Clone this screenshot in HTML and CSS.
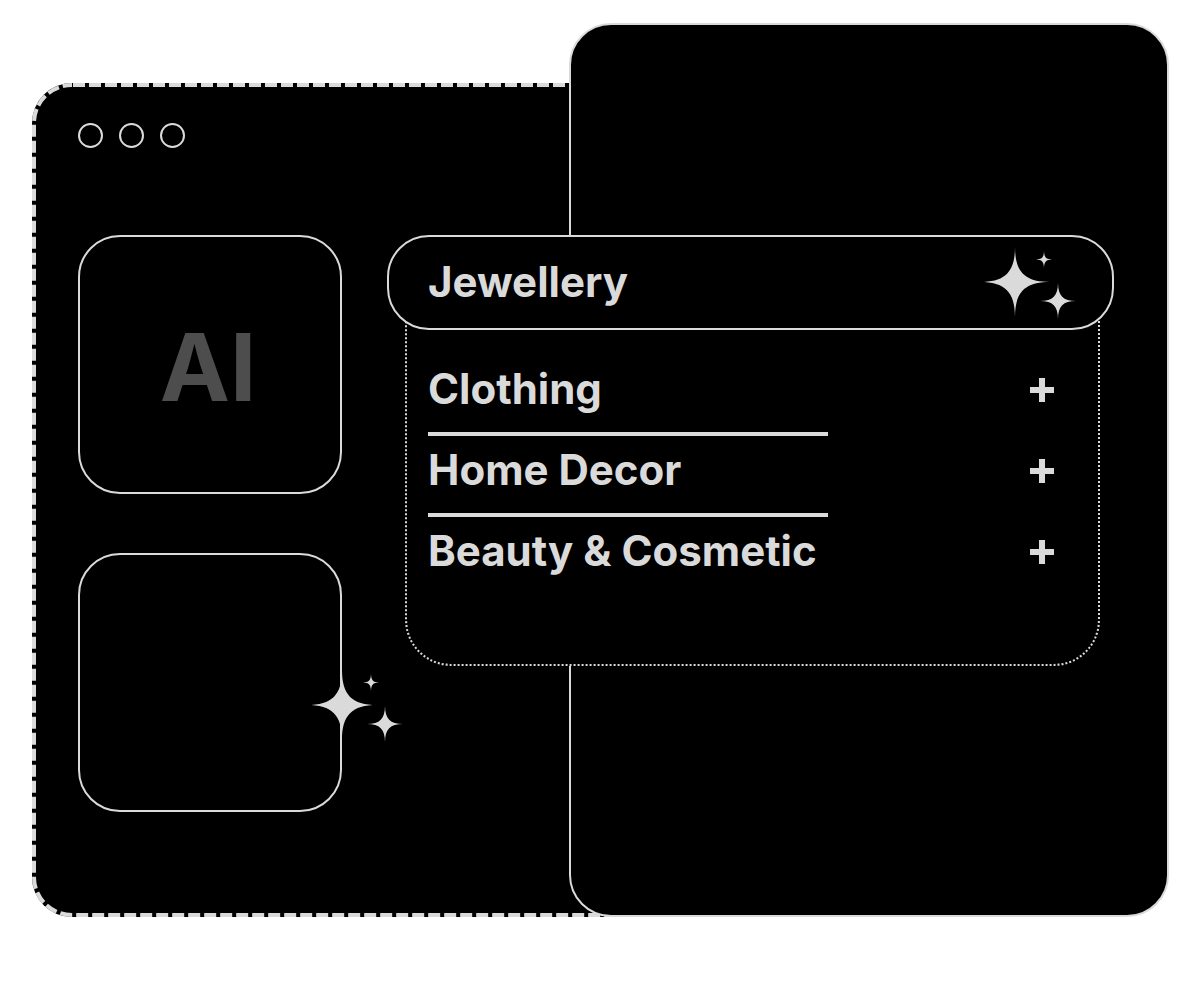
FILE: index.html
```html
<!DOCTYPE html>
<html lang="en">
<head>
    <meta charset="UTF-8">
    <meta name="viewport" content="width=device-width, initial-scale=1.0">
    <title>AI Categories</title>
    <link rel="stylesheet" href="styles.css">
</head>
<body>
    <svg class="defs" aria-hidden="true">
        <symbol id="sparkles" viewBox="0 0 96 72">
            <path d="M35 0C35 25 45 35 70 35C45 35 35 45 35 70C35 45 25 35 0 35C25 35 35 25 35 0Z"/>
            <path d="M64 4C64.300 10.500 66 12.200 72 12.500C66 12.800 64.300 14.500 64 21C63.700 14.500 62 12.800 56 12.500C62 12.200 63.700 10.500 64 4Z"/>
            <path d="M78 36C78.200 49 83 53.800 96 54C83 54.200 78.200 59 78 72C77.800 59 73 54.200 60 54C73 53.800 77.800 49 78 36Z"/>
        </symbol>
    </svg>
    <main class="stage">
        <section class="window">
            <svg class="window-border" aria-hidden="true"><rect/></svg>
            <div class="dots">
                <span class="dot"></span>
                <span class="dot"></span>
                <span class="dot"></span>
            </div>
            <div class="tiles">
                <div class="tile">AI</div>
                <div class="tile">
                    <svg class="sparkles tile-sparkles" aria-hidden="true"><use href="#sparkles"/></svg>
                </div>
            </div>
        </section>
        <section class="panel"></section>
        <section class="categories">
            <button class="selected" type="button">
                <span class="label">Jewellery</span>
                <svg class="sparkles" aria-hidden="true"><use href="#sparkles"/></svg>
            </button>
            <ul class="category-list">
                <li>
                    <div class="category"><span class="label">Clothing</span><button class="add" type="button" aria-label="Add Clothing"></button></div>
                </li>
                <li>
                    <div class="category"><span class="label">Home Decor</span><button class="add" type="button" aria-label="Add Home Decor"></button></div>
                </li>
                <li>
                    <div class="category"><span class="label">Beauty &amp; Cosmetic</span><button class="add" type="button" aria-label="Add Beauty &amp; Cosmetic"></button></div>
                </li>
            </ul>
        </section>
    </main>
</body>
</html>
```
FILE: styles.css
```css
* {
    box-sizing: border-box;
}
body {
    font-family: Inter, sans-serif;
    margin: 0;
    background-color: white;
    color: #dadada;
}
.defs {
    display: none;
}
.stage {
    display: grid;
    grid-template-columns: 537fr 600fr;
    grid-template-rows: 60px auto;
    padding: 23px 31px 40px 32px;
}
.window {
    position: relative;
    grid-column: 1 / 3;
    grid-row: 2;
    margin-right: 397px;
    padding: 40px 46px 105px;
    background-color: black;
    border-radius: 40px;
}
/* dashed outline, the dashes are longer than a css border gives */
.window-border {
    position: absolute;
    inset: 0;
    width: 100%;
    height: 100%;
}
.window-border rect {
    x: 2px;
    y: 2px;
    width: calc(100% - 4px);
    height: calc(100% - 4px);
    rx: 38px;
    fill: none;
    stroke: #dadada;
    stroke-width: 4px;
    stroke-dasharray: 12 4;
    stroke-dashoffset: -1px;
}
.dots {
    display: flex;
    gap: 16px;
    margin-bottom: 87px;
}
.dot {
    width: 25px;
    height: 25px;
    border: 2px solid #dadada;
    border-radius: 50%;
}
.tiles {
    display: flex;
    flex-direction: column;
    gap: 59px;
}
.tile {
    position: relative;
    display: flex;
    align-items: center;
    justify-content: center;
    width: 264px;
    height: 259px;
    padding: 4px 4px 0 0;
    border: 2px solid #dadada;
    border-radius: 42px;
    color: #4d4d4d;
    font-size: 94px;
    font-weight: bold;
}
.sparkles {
    width: 96px;
    height: 72px;
    fill: #dadada;
}
.tile-sparkles {
    position: absolute;
    top: 115px;
    right: -63px;
}
.panel {
    grid-column: 2;
    grid-row: 1 / 3;
    z-index: 1;
    background-color: black;
    border: 2px solid #dadada;
    border-radius: 42px;
}
.categories {
    grid-column: 1 / 3;
    grid-row: 1 / 3;
    align-self: start;
    z-index: 2;
    margin: 212px 55px 0 355px;
    font-size: 42px;
    font-weight: bold;
}
.label {
    padding-bottom: 3px;
}
.selected {
    position: relative;
    display: flex;
    align-items: center;
    justify-content: space-between;
    width: 100%;
    height: 95px;
    padding: 0 36px 0 39px;
    background-color: black;
    border: 2px solid #dadada;
    border-radius: 42px;
    color: inherit;
    font: inherit;
    cursor: pointer;
}
.category-list {
    list-style: none;
    margin: -40px 14px 0 18px;
    padding: 75px 44px 87px 21px;
    background-color: black;
    border: 2px dotted #dadada;
    border-top: none;
    border-radius: 0 0 46px 46px;
}
.category {
    display: flex;
    align-items: center;
    justify-content: space-between;
    height: 50px;
}
.category-list li:not(:last-child)::after {
    content: "";
    display: block;
    width: 400px;
    height: 4px;
    margin: 17px 0 10px;
    background-color: #dadada;
}
.add {
    width: 24px;
    height: 24px;
    padding: 0;
    border: none;
    background:
        linear-gradient(#dadada, #dadada) center / 24px 6px no-repeat,
        linear-gradient(#dadada, #dadada) center / 6px 24px no-repeat;
    cursor: pointer;
}
```
